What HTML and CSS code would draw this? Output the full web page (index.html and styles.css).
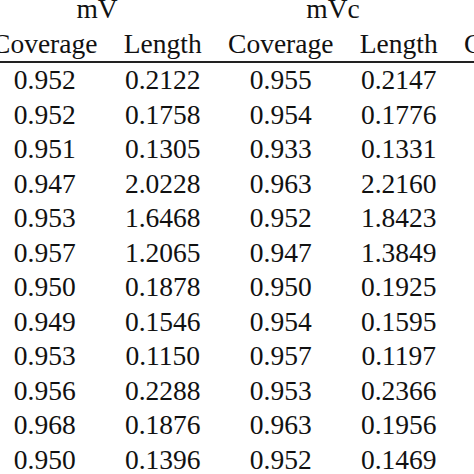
FILE: index.html
```html
<!DOCTYPE html>
<html>
<head>
<meta charset="utf-8">
<link rel="stylesheet" href="styles.css">
</head>
<body>
<div class="table">
  <div class="row group">
    <div class="span2">mV</div>
    <div class="span2">mVc</div>
    <div></div>
  </div>
  <div class="row head">
    <div>Coverage</div><div>Length</div><div>Coverage</div><div>Length</div><div>Coverage</div>
  </div>
  <div class="rule"></div>
  <div class="row"><div>0.952</div><div>0.2122</div><div>0.955</div><div>0.2147</div><div></div></div>
  <div class="row"><div>0.952</div><div>0.1758</div><div>0.954</div><div>0.1776</div><div></div></div>
  <div class="row"><div>0.951</div><div>0.1305</div><div>0.933</div><div>0.1331</div><div></div></div>
  <div class="row"><div>0.947</div><div>2.0228</div><div>0.963</div><div>2.2160</div><div></div></div>
  <div class="row"><div>0.953</div><div>1.6468</div><div>0.952</div><div>1.8423</div><div></div></div>
  <div class="row"><div>0.957</div><div>1.2065</div><div>0.947</div><div>1.3849</div><div></div></div>
  <div class="row"><div>0.950</div><div>0.1878</div><div>0.950</div><div>0.1925</div><div></div></div>
  <div class="row"><div>0.949</div><div>0.1546</div><div>0.954</div><div>0.1595</div><div></div></div>
  <div class="row"><div>0.953</div><div>0.1150</div><div>0.957</div><div>0.1197</div><div></div></div>
  <div class="row"><div>0.956</div><div>0.2288</div><div>0.953</div><div>0.2366</div><div></div></div>
  <div class="row"><div>0.968</div><div>0.1876</div><div>0.963</div><div>0.1956</div><div></div></div>
  <div class="row"><div>0.950</div><div>0.1396</div><div>0.952</div><div>0.1469</div><div></div></div>
</div>
</body>
</html>
```
FILE: styles.css
```css
html, body {
  margin: 0;
  padding: 0;
  background: #fff;
  overflow: hidden;
  width: 474px;
  height: 474px;
}
.table {
  margin-left: -21px;
  margin-top: -9px;
  width: 604px;
  font-family: "Liberation Serif", "DejaVu Serif", serif;
  font-size: 27.5px;
  color: #111;
}
.row {
  display: grid;
  grid-template-columns: 131.5px 104.5px 131.5px 104.5px 131.5px;
  height: 34.5px;
  line-height: 34.5px;
  text-align: center;
  white-space: nowrap;
}
.row.group, .row.head {
  height: 35px;
  line-height: 35px;
}
.span2 {
  grid-column: span 2;
}
.rule {
  height: 2px;
  background: #222;
}
```
